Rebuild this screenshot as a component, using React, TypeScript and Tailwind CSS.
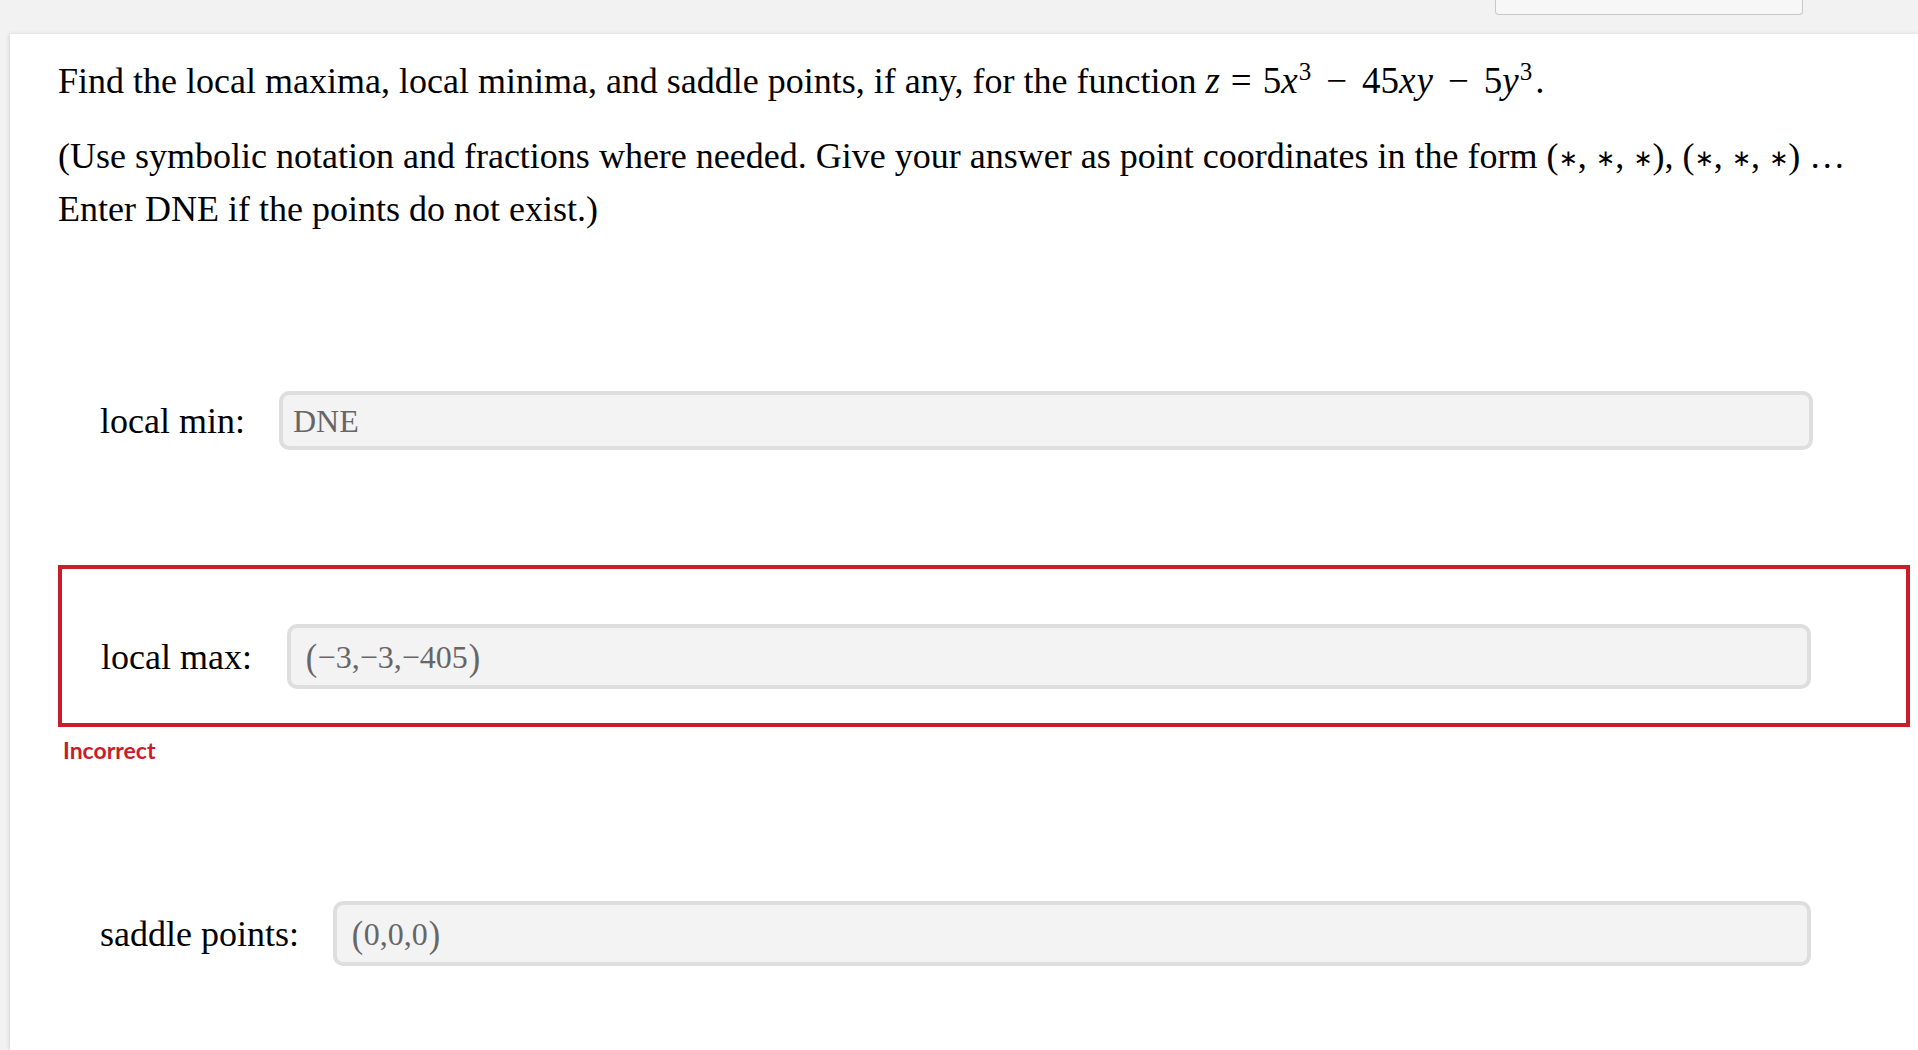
const serif = { fontFamily: '"Liberation Serif", "Times New Roman", serif' };

function Sup({ c }: { c: string }) {
  return <span className="text-[25px] leading-none relative -top-[13px] ml-[1px]">{c}</span>;
}

function MathFn() {
  return (
    <span className="text-[37px] leading-none">
      <i>z</i>
      <span className="mx-[11px]">=</span>
      5<i>x</i>
      <Sup c="3" />
      <span className="mx-[15px]">−</span>
      45<i>x</i>
      <i className="ml-[1px]">y</i>
      <span className="mx-[15px]">−</span>
      5<i>y</i>
      <Sup c="3" />
      <span className="ml-[3px]">.</span>
    </span>
  );
}

function Star() {
  return (
    <span
      className="text-[23px] leading-none relative -top-[2px]"
      style={{ fontFamily: '"DejaVu Sans", sans-serif' }}
    >
      ∗
    </span>
  );
}

function Triple() {
  return (
    <span>
      (<Star />, <Star />, <Star />)
    </span>
  );
}

function Paren({ c }: { c: string }) {
  return <span className="text-[38px] leading-none inline-block scale-x-90">{c}</span>;
}

function AnswerBox({ children, tall }: { children: React.ReactNode; tall?: boolean }) {
  return (
    <div
      className={`flex-1 flex items-center rounded-[10px] border-4 border-[#dedede] bg-[#f3f3f3] text-[#666] text-[32px] ${
        tall ? "h-[65px] pl-[14px]" : "h-[59px] pl-[10px]"
      }`}
    >
      {children}
    </div>
  );
}

export default function App() {
  return (
    <div className="min-h-[1050px] w-full bg-[#f2f2f2] text-black" style={serif}>
      <div className="h-[34px] flex justify-end pr-[115px]">
        <div className="w-[308px] h-[15px] border border-t-0 border-[#c8c8c8] rounded-b-[4px] bg-[#f7f7f7]" />
      </div>

      <div className="ml-[10px] bg-white min-h-[1016px] pl-[48px] pr-[8px] pt-[21px] shadow-[-1px_0_4px_rgba(0,0,0,0.12)] text-[36px]">
        <p className="leading-[53px] whitespace-nowrap">
          Find the local maxima, local minima, and saddle points, if any, for the function <MathFn />
        </p>
        <p className="mt-[22px] leading-[53px]">
          <span className="whitespace-nowrap">
            (Use symbolic notation and fractions where needed. Give your answer as point coordinates in the form{" "}
            <Triple />, <Triple /> …
          </span>
          <br />
          Enter DNE if the points do not exist.)
        </p>

        <div className="mt-[155px] flex items-center pl-[42px] pr-[97px]">
          <span className="mr-[34px] whitespace-nowrap">local min:</span>
          <AnswerBox>DNE</AnswerBox>
        </div>

        <div className="mt-[115px] border-4 border-[#cc1b2b] pt-[55px] pb-[34px] pl-[39px] pr-[95px]">
          <div className="flex items-center">
            <span className="mr-[35px] whitespace-nowrap">local max:</span>
            <AnswerBox tall>
              <Paren c="(" />
              <span>−3,−3,−405</span>
              <Paren c=")" />
            </AnswerBox>
          </div>
        </div>
        <div
          className="mt-[9px] pl-[5px] text-[23px] font-bold text-[#cc1b2b] leading-[28px]"
          style={{ fontFamily: '"Source Sans Pro", Lato, "Open Sans", sans-serif' }}
        >
          Incorrect
        </div>

        <div className="mt-[137px] flex items-center pl-[42px] pr-[99px]">
          <span className="mr-[34px] whitespace-nowrap">saddle points:</span>
          <AnswerBox tall>
            <Paren c="(" />
            <span>0,0,0</span>
            <Paren c=")" />
          </AnswerBox>
        </div>
      </div>
    </div>
  );
}
